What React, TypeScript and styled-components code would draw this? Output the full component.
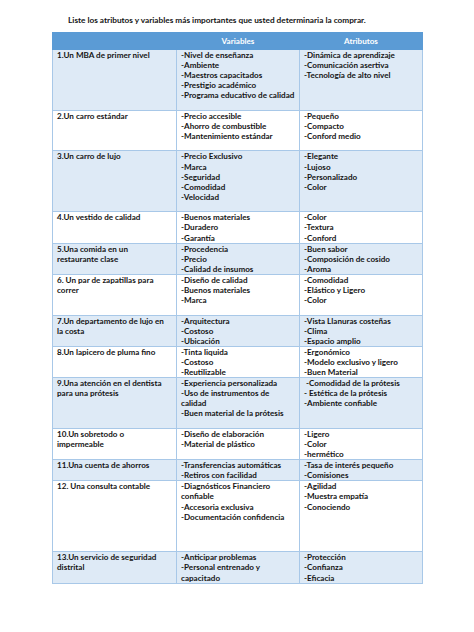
import React from "react";
import styled, { createGlobalStyle } from "styled-components";

type Item = {
  name: string[];
  variables: string[];
  atributos: string[];
  lines: number;
};

const items: Item[] = [
  {
    name: ["1.Un MBA de primer nivel"],
    variables: [
      "-Nivel de enseñanza",
      "-Ambiente",
      "-Maestros capacitados",
      "-Prestigio académico",
      "-Programa educativo de calidad",
    ],
    atributos: ["-Dinámica de aprendizaje", "-Comunicación asertiva", "-Tecnología de alto nivel"],
    lines: 6,
  },
  {
    name: ["2.Un carro estándar"],
    variables: ["-Precio accesible", "-Ahorro de combustible", "-Mantenimiento estándar"],
    atributos: ["-Pequeño", "-Compacto", "-Conford medio"],
    lines: 4,
  },
  {
    name: ["3.Un carro de lujo"],
    variables: ["-Precio Exclusivo", "-Marca", "-Seguridad", "-Comodidad", "-Velocidad"],
    atributos: ["-Elegante", "-Lujoso", "-Personalizado", "-Color"],
    lines: 6,
  },
  {
    name: ["4.Un vestido de calidad"],
    variables: ["-Buenos materiales", "-Duradero", "-Garantía"],
    atributos: ["-Color", "-Textura", "-Conford"],
    lines: 3,
  },
  {
    name: ["5.Una comida en un", "restaurante clase"],
    variables: ["-Procedencia", "-Precio", "-Calidad de insumos"],
    atributos: ["-Buen sabor", "-Composición de cosido", "-Aroma"],
    lines: 3,
  },
  {
    name: ["6. Un par de zapatillas para", "correr"],
    variables: ["-Diseño de calidad", "-Buenos materiales", "-Marca"],
    atributos: ["-Comodidad", "-Elástico y Ligero", "-Color"],
    lines: 4,
  },
  {
    name: ["7.Un departamento de lujo en", "la costa"],
    variables: ["-Arquitectura", "-Costoso", "-Ubicación"],
    atributos: ["-Vista Llanuras costeñas", "-Clima", "-Espacio amplio"],
    lines: 3,
  },
  {
    name: ["8.Un lapicero de pluma fino"],
    variables: ["-Tinta liquida", "-Costoso", "-Reutilizable"],
    atributos: ["-Ergonómico", "-Modelo exclusivo y ligero", "-Buen Material"],
    lines: 3,
  },
  {
    name: ["9.Una atención en el dentista", "para una prótesis"],
    variables: [
      "-Experiencia personalizada",
      "-Uso de instrumentos de",
      "calidad",
      "-Buen material de la prótesis",
    ],
    atributos: [" -Comodidad de la prótesis", "- Estética de la prótesis", "-Ambiente confiable"],
    lines: 5,
  },
  {
    name: ["10.Un sobretodo o", "impermeable"],
    variables: ["-Diseño de elaboración", "-Material de plástico"],
    atributos: ["-Ligero", "-Color", "-hermético"],
    lines: 3,
  },
  {
    name: ["11.Una cuenta de ahorros"],
    variables: ["-Transferencias automáticas", "-Retiros con facilidad"],
    atributos: ["-Tasa de interés pequeño", "-Comisiones"],
    lines: 2,
  },
  {
    name: ["12. Una consulta contable"],
    variables: [
      "-Diagnósticos Financiero",
      "confiable",
      "-Accesoria exclusiva",
      "-Documentación confidencia",
    ],
    atributos: ["-Agilidad", "-Muestra empatía", "-Conociendo"],
    lines: 7,
  },
  {
    name: ["13.Un servicio de seguridad", "distrital"],
    variables: ["-Anticipar problemas", "-Personal entrenado y", "capacitado"],
    atributos: ["-Protección", "-Confianza", "-Eficacia"],
    lines: 3,
  },
];

const GlobalStyle = createGlobalStyle`
  html, body {
    margin: 0;
    padding: 0;
    background: #ffffff;
  }
  body {
    font-family: Lato, "Liberation Sans", sans-serif;
    color: #141414;
  }
`;

const Page = styled.div`
  width: 474px;
  height: 632px;
  padding-top: 14px;
  box-sizing: border-box;
`;

const Title = styled.p`
  margin: 0 0 6px 68px;
  font-size: 8.25px;
  line-height: 12px;
  font-weight: 700;
`;

const Table = styled.table`
  margin-left: 52px;
  width: 370px;
  border-collapse: collapse;
  table-layout: fixed;
  font-size: 8.1px;
  font-weight: 700;
  line-height: 10.1px;
`;

const HeadCell = styled.th`
  background: #5b9bd5;
  color: #ffffff;
  height: 16px;
  padding: 0;
  text-align: center;
  font-weight: 700;
  border: 1px solid #5b9bd5;
`;

const Row = styled.tr<{ $band: boolean }>`
  background: ${(p) => (p.$band ? "#deeaf6" : "#ffffff")};
`;

const Cell = styled.td<{ $lines: number }>`
  height: ${(p) => p.$lines * 10.15 - 1}px;
  padding: 0 3px 0 4px;
  vertical-align: top;
  border: 1px solid #a8c8e8;
  white-space: pre;
`;

const Line = styled.div``;

const lines = (list: string[]) => list.map((t, i) => <Line key={i}>{t}</Line>);

export default function App() {
  return (
    <Page>
      <GlobalStyle />
      <Title>Liste los atributos y variables más importantes que usted determinaria la comprar.</Title>
      <Table>
        <colgroup>
          <col style={{ width: 124 }} />
          <col style={{ width: 123 }} />
          <col style={{ width: 123 }} />
        </colgroup>
        <thead>
          <tr>
            <HeadCell />
            <HeadCell>Variables</HeadCell>
            <HeadCell>Atributos</HeadCell>
          </tr>
        </thead>
        <tbody>
          {items.map((item, i) => (
            <Row key={i} $band={i % 2 === 0}>
              <Cell $lines={item.lines}>{lines(item.name)}</Cell>
              <Cell $lines={item.lines}>{lines(item.variables)}</Cell>
              <Cell $lines={item.lines}>{lines(item.atributos)}</Cell>
            </Row>
          ))}
        </tbody>
      </Table>
    </Page>
  );
}
